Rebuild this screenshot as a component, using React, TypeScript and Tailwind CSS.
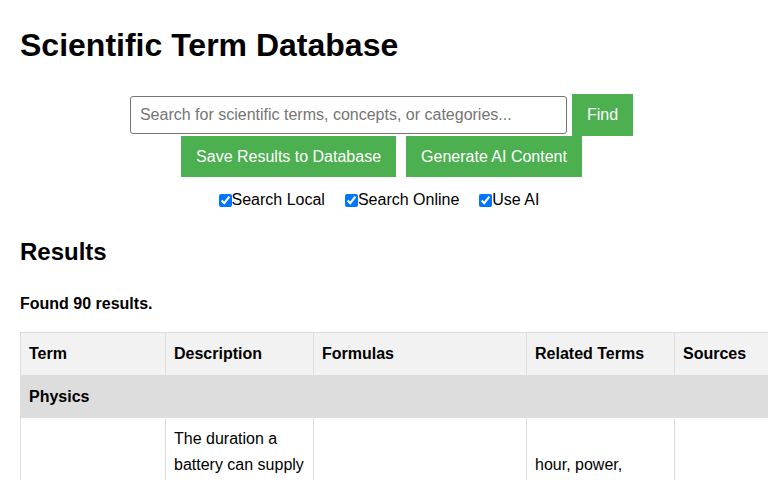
import { useState } from "react";

const FONT = "font-['Liberation_Sans',Arial,sans-serif]";

const OPTIONS = [
	{ id: "local", label: "Search Local" },
	{ id: "online", label: "Search Online" },
	{ id: "ai", label: "Use AI" },
];

const COLUMNS = [
	{ title: "Term", width: "w-[145px]" },
	{ title: "Description", width: "w-[148px]" },
	{ title: "Formulas", width: "w-[213px]" },
	{ title: "Related Terms", width: "w-[148px]" },
	{ title: "Sources", width: "w-[150px]" },
];

const ROWS = [
	{
		term: "Ampere-hour",
		description: "The duration a battery can supply a specific current before being discharged.",
		formulas: "",
		related: "hour, power, current, capacity, battery",
		sources: "",
	},
];

export default function App() {
	const [query, setQuery] = useState("");

	return (
		<div className={`${FONT} min-h-screen overflow-hidden bg-white p-5 text-[16px] leading-[1.6] text-black`}>
			<h1 className="text-[32px] font-bold leading-[1.6]">Scientific Term Database</h1>

			{/* search controls */}
			<div className="mt-[23px] flex items-center justify-center gap-[5px] pr-[5px]">
				<input
					value={query}
					onChange={(e) => setQuery(e.target.value)}
					placeholder="Search for scientific terms, concepts, or categories..."
					className="h-[38px] w-[437px] rounded-[3px] border border-[#767676] px-[9px] text-[16px] outline-none placeholder:text-[#757575]"
				/>
				<button className="bg-[#4CAF50] px-[15px] py-2 text-[16px] leading-[1.6] text-white">Find</button>
			</div>
			<div className="flex justify-center gap-[10px] pr-[5px]">
				<button className="bg-[#4CAF50] px-[15px] py-2 text-[16px] leading-[1.6] text-white">
					Save Results to Database
				</button>
				<button className="bg-[#4CAF50] px-[15px] py-2 text-[16px] leading-[1.6] text-white">
					Generate AI Content
				</button>
			</div>
			<div className="mt-[10px] flex justify-center pr-[10px]">
				{OPTIONS.map((o) => (
					<label key={o.id} className="mr-5 flex items-center last:mr-0">
						<input type="checkbox" defaultChecked className="mt-px h-[13px] w-[13px]" />
						{o.label}
					</label>
				))}
			</div>

			<h2 className="mt-5 text-[24px] font-bold leading-[1.6]">Results</h2>
			<p className="mt-5 font-bold">Found 90 results.</p>

			<table className="mt-[15px] w-[804px] table-fixed border-collapse">
				<thead>
					<tr className="bg-[#f2f2f2]">
						{COLUMNS.map((c) => (
							<th key={c.title} className={`${c.width} border border-[#ddd] p-2 text-left font-bold`}>
								{c.title}
							</th>
						))}
					</tr>
				</thead>
				<tbody>
					<tr className="bg-[#dddddd]">
						<td colSpan={5} className="border border-[#ddd] p-2 font-bold">
							Physics
						</td>
					</tr>
					{ROWS.map((r) => (
						<tr key={r.term}>
							<td className="border border-[#ddd] p-2 align-middle">{r.term}</td>
							<td className="border border-[#ddd] p-2 align-middle">{r.description}</td>
							<td className="border border-[#ddd] p-2 align-middle">{r.formulas}</td>
							<td className="border border-[#ddd] p-2 align-middle">{r.related}</td>
							<td className="border border-[#ddd] p-2 align-middle">{r.sources}</td>
						</tr>
					))}
				</tbody>
			</table>
		</div>
	);
}
